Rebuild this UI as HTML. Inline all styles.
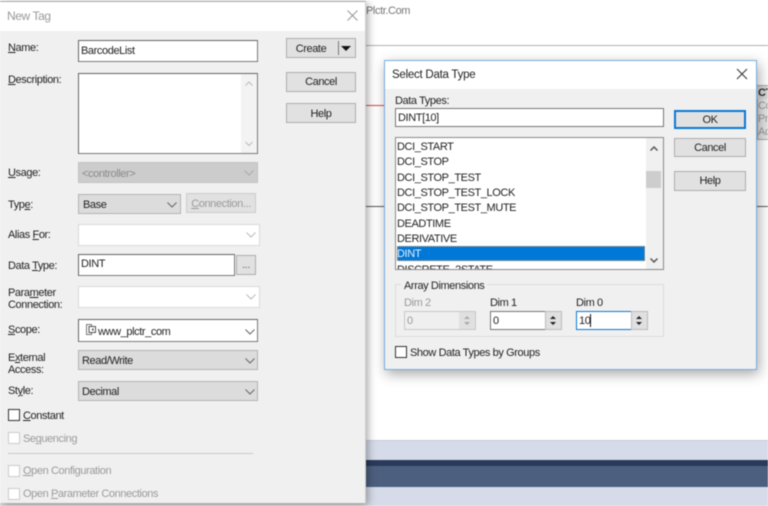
<!DOCTYPE html>
<html><head><meta charset="utf-8">
<style>
html,body{margin:0;padding:0;width:768px;height:506px;overflow:hidden;background:#fff}
body{position:relative;font-family:"Liberation Sans",sans-serif;font-size:11px;letter-spacing:-.4px;color:#222}
#w{position:absolute;left:0;top:0;width:768px;height:506px;overflow:hidden;filter:blur(.45px)}
.a{position:absolute;box-sizing:border-box}
.t{position:absolute;white-space:nowrap;line-height:13px;transform:translateY(1px)}
.g{color:#9a9a9a}
.in{position:absolute;box-sizing:border-box;background:#fff;border:1px solid #7a7a7a;border-top-color:#666;border-left-color:#666;padding-left:2px}
.dis{position:absolute;box-sizing:border-box;background:#fff;border:1px solid #d9d9d9}
.sel{position:absolute;box-sizing:border-box;background:#dcdcdc;border:1px solid #b4b4b4}
.btn{position:absolute;box-sizing:border-box;background:#e1e1e1;border:1px solid #adadad;text-align:center;color:#222}
.cb{position:absolute;box-sizing:border-box;width:12px;height:12px;background:#fff;border:1px solid #333}
.cbd{border-color:#ccc}
.li{position:absolute;left:397px;width:248px;height:15px;line-height:18px;color:#222;font-size:11px;white-space:nowrap}
u{text-decoration-thickness:1px;text-underline-offset:1px}
svg{position:absolute;overflow:visible}
.ar{fill:none;stroke:#666;stroke-width:1}
.arg{fill:none;stroke:#bbb;stroke-width:1}
</style></head><body><div id="w">
<!-- background -->
<div class="a" style="left:366px;top:45px;width:402px;height:1px;background:#b0b0b0"></div>
<div class="a" style="left:366px;top:105px;width:20px;height:1px;background:#d44"></div>
<div class="a" style="left:366px;top:206px;width:402px;height:1px;background:#555"></div>
<div class="t" style="left:366px;top:4px;color:#777;font-size:11px">Plctr.Com</div>
<div class="a" style="left:757px;top:85px;width:11px;height:55px;background:#e4e4e4;border-top:1px solid #aaa;border-bottom:1px solid #aaa;border-left:1px solid #aaa"></div>
<div class="a" style="left:757px;top:86px;width:11px;height:13px;background:#d8d8d8"></div>
<div class="t" style="left:758px;top:86px;font-weight:bold;color:#333">CT</div>
<div class="t g" style="left:758px;top:99px">Co</div>
<div class="t g" style="left:758px;top:112px">Pre</div>
<div class="t g" style="left:758px;top:125px">Ac</div>
<div class="a" style="left:366px;top:440px;width:402px;height:66px;background:#d5dbe8;border-top:1px solid #c4cad8"></div>
<div class="a" style="left:366px;top:460px;width:402px;height:6px;background:#2a3a5a"></div>
<div class="a" style="left:366px;top:466px;width:402px;height:21px;background:#4d5f7f"></div>
<div class="a" style="left:0;top:500px;width:366px;height:6px;background:#ddd"></div>

<!-- New Tag dialog -->
<div class="a" style="left:0;top:1px;width:366px;height:502px;background:#f0f0f0;border-top:1px solid #a8a8a8;border-right:1px solid #cfcfcf;box-shadow:2px 2px 8px rgba(0,0,0,.35)"></div>
<div class="a" style="left:0;top:2px;width:365px;height:29px;background:#fff"></div>
<div class="t" style="left:7px;top:9px;color:#999;font-size:12px">New Tag</div>
<svg style="left:347px;top:10px" width="11" height="11"><path d="M.5.500l10 10M10.500.500l-10 10" stroke="#999" fill="none"/></svg>

<div class="t" style="left:8px;top:41px"><u>N</u>ame:</div>
<div class="in" style="left:78px;top:40px;width:180px;height:22px;line-height:21px">BarcodeList</div>
<div class="t" style="left:8px;top:73px"><u>D</u>escription:</div>
<div class="in" style="left:78px;top:73px;width:180px;height:81px"></div>
<div class="a" style="left:241px;top:74px;width:16px;height:79px;background:#f3f3f3"></div>
<svg style="left:245px;top:81px" width="8" height="6"><path d="M.5 4.500l3.500-3.500 3.500 3.500" class="arg"/></svg>
<svg style="left:245px;top:141px" width="8" height="6"><path d="M.5 1l3.500 3.500L7.500 1" class="arg"/></svg>

<div class="t" style="left:8px;top:166px"><u>U</u>sage:</div>
<div class="a" style="left:78px;top:162px;width:180px;height:21px;background:#cccccc;border:1px solid #c4c4c4"></div>
<div class="t" style="left:82px;top:167px;color:#8a8a8a">&lt;controller&gt;</div>
<svg style="left:244px;top:170px" width="10" height="6"><path d="M.5.500l4.500 4.500 4.500-4.500" fill="none" stroke="#aaa"/></svg>

<div class="t" style="left:8px;top:198px">Typ<u>e</u>:</div>
<div class="sel" style="left:78px;top:194px;width:103px;height:20px"></div>
<div class="t" style="left:83px;top:198px">Base</div>
<svg style="left:167px;top:202px" width="10" height="6"><path d="M.5.500l4.500 4.500 4.500-4.500" class="ar"/></svg>
<div class="btn" style="left:186px;top:193px;width:70px;height:20px;line-height:20px;color:#9a9a9a;border-color:#ccc"><u>C</u>onnection...</div>

<div class="t" style="left:8px;top:228px">Alias <u>F</u>or:</div>
<div class="dis" style="left:78px;top:224px;width:182px;height:22px"></div>
<svg style="left:246px;top:232px" width="10" height="6"><path d="M.5.500l4.500 4.500 4.500-4.500" class="arg"/></svg>

<div class="t" style="left:8px;top:259px">Data <u>T</u>ype:</div>
<div class="in" style="left:78px;top:254px;width:157px;height:22px;padding-top:3px;line-height:13px">DINT</div>
<div class="btn" style="left:236px;top:255px;width:20px;height:20px;line-height:19px;color:#666">...</div>

<div class="t" style="left:8px;top:286px;line-height:12px">Para<u>m</u>eter<br>Connection:</div>
<div class="dis" style="left:78px;top:286px;width:182px;height:22px"></div>
<svg style="left:246px;top:294px" width="10" height="6"><path d="M.5.500l4.500 4.500 4.500-4.500" class="arg"/></svg>

<div class="t" style="left:8px;top:323px"><u>S</u>cope:</div>
<div class="in" style="left:78px;top:319px;width:180px;height:23px"></div>
<svg style="left:86px;top:324px" width="10" height="11"><path d="M.5.500h5v10h-5z" fill="#fff" stroke="#777"/><path d="M3 2.500h6.500v6H3z" fill="#fff" stroke="#555"/><path d="M7.500 4l-2 1.500 2 1.500z" fill="#444"/></svg>
<div class="t" style="left:98px;top:325px">www_plctr_com</div>
<svg style="left:245px;top:329px" width="10" height="6"><path d="M.5.500l4.500 4.500 4.500-4.500" class="ar"/></svg>

<div class="t" style="left:8px;top:351px;line-height:12px">E<u>x</u>ternal<br>Access:</div>
<div class="sel" style="left:78px;top:350px;width:180px;height:20px"></div>
<div class="t" style="left:82px;top:354px">Read/Write</div>
<svg style="left:245px;top:358px" width="10" height="6"><path d="M.5.500l4.500 4.500 4.500-4.500" class="ar"/></svg>

<div class="t" style="left:8px;top:384px">St<u>y</u>le:</div>
<div class="sel" style="left:78px;top:381px;width:180px;height:20px"></div>
<div class="t" style="left:82px;top:385px">Decimal</div>
<svg style="left:245px;top:389px" width="10" height="6"><path d="M.5.500l4.500 4.500 4.500-4.500" class="ar"/></svg>

<div class="cb" style="left:8px;top:409px"></div>
<div class="t" style="left:23px;top:409px"><u>C</u>onstant</div>
<div class="cb cbd" style="left:8px;top:432px"></div>
<div class="t g" style="left:23px;top:432px">Se<u>q</u>uencing</div>
<div class="a" style="left:8px;top:453px;width:245px;height:1px;background:#c8c8c8"></div>
<div class="cb cbd" style="left:8px;top:465px"></div>
<div class="t g" style="left:23px;top:464px"><u>O</u>pen Configuration</div>
<div class="cb cbd" style="left:8px;top:488px"></div>
<div class="t g" style="left:23px;top:487px">Open <u>P</u>arameter Connections</div>

<div class="btn" style="left:286px;top:38px;width:70px;height:20px;line-height:20px;padding-right:20px">Create</div>
<div class="a" style="left:338px;top:41px;width:1px;height:14px;background:#777"></div>
<svg style="left:341px;top:46px" width="10" height="5"><path d="M0 0h10L5 5z" fill="#111"/></svg>
<div class="btn" style="left:286px;top:72px;width:70px;height:20px;line-height:19px">Cancel</div>
<div class="btn" style="left:286px;top:103px;width:70px;height:20px;line-height:20px">Help</div>

<!-- Select Data Type dialog -->
<div class="a" style="left:384px;top:60px;width:373px;height:310px;background:#f0f0f0;border:1px solid #76aee0;box-shadow:2px 4px 12px rgba(0,0,0,.35)"></div>
<div class="a" style="left:385px;top:61px;width:371px;height:28px;background:#fff"></div>
<div class="t" style="left:392px;top:68px;font-size:11.500px;letter-spacing:-.25px">Select Data Type</div>
<svg style="left:737px;top:69px" width="10" height="10"><path d="M0 0l10 10M10 0L0 10" stroke="#333" fill="none"/></svg>

<div class="t" style="left:395px;top:94px">Data Types:</div>
<div class="in" style="left:395px;top:108px;width:269px;height:19px;line-height:18px;border-color:#777">DINT[10]</div>
<div class="btn" style="left:674px;top:110px;width:72px;height:19px;line-height:16px;border:2px solid #0a78d6">OK</div>
<div class="btn" style="left:674px;top:138px;width:72px;height:19px;line-height:18px">Cancel</div>
<div class="btn" style="left:674px;top:171px;width:72px;height:20px;line-height:19px">Help</div>

<div class="a" style="left:395px;top:137px;width:269px;height:133px;background:#fff;border:1px solid #8a8a8a;overflow:hidden"></div>
<div class="a" style="left:646px;top:138px;width:17px;height:131px;background:#f0f0f0"></div>
<div class="a" style="left:646px;top:171px;width:15px;height:17px;background:#cdcdcd"></div>
<svg style="left:650px;top:146px" width="8" height="5"><path d="M.5 4.500L4 1l3.500 3.500" fill="none" stroke="#555" stroke-width="1.500"/></svg>
<svg style="left:650px;top:258px" width="8" height="5"><path d="M.5.500L4 4l3.500-3.500" fill="none" stroke="#555" stroke-width="1.500"/></svg>
<div class="li" style="top:138px">DCI_START</div>
<div class="li" style="top:153px">DCI_STOP</div>
<div class="li" style="top:169px">DCI_STOP_TEST</div>
<div class="li" style="top:184px">DCI_STOP_TEST_LOCK</div>
<div class="li" style="top:199px">DCI_STOP_TEST_MUTE</div>
<div class="li" style="top:215px">DEADTIME</div>
<div class="li" style="top:230px">DERIVATIVE</div>
<div class="li" style="top:246px;background:#0078d7;color:#e8f0f8;outline:1px dotted #b89878;outline-offset:-1px;line-height:16px">DINT</div>
<div class="a" style="left:397px;top:261px;width:248px;height:8px;overflow:hidden"><div class="li" style="left:0;top:0">DISCRETE_2STATE</div></div>

<div class="a" style="left:395px;top:284px;width:269px;height:53px;border:1px solid #dcdcdc"></div>
<div class="t" style="left:401px;top:279px;background:#f0f0f0;padding:0 3px">Array Dimensions</div>
<div class="t g" style="left:404px;top:296px">Dim 2</div>
<div class="t" style="left:490px;top:296px">Dim 1</div>
<div class="t" style="left:576px;top:296px">Dim 0</div>

<div class="a" style="left:404px;top:311px;width:72px;height:19px;background:#efefef;border:1px solid #c8c8c8"></div>
<div class="t g" style="left:407px;top:314px">0</div>
<div class="a" style="left:459px;top:312px;width:16px;height:17px;background:#e0e0e0"></div>
<svg style="left:463px;top:315px" width="8" height="11"><path d="M1 4l3-3 3 3zM1 7l3 3 3-3z" fill="#aaa"/></svg>

<div class="a" style="left:490px;top:311px;width:72px;height:19px;background:#fff;border:1px solid #777"></div>
<div class="t" style="left:493px;top:314px">0</div>
<div class="a" style="left:545px;top:311px;width:17px;height:19px;background:#e0e0e0;border:1px solid #bbb"></div>
<svg style="left:549px;top:315px" width="8" height="11"><path d="M1 4l3-3 3 3zM1 7l3 3 3-3z" fill="#222"/></svg>

<div class="a" style="left:576px;top:311px;width:72px;height:19px;background:#fff;border:1px solid #0a78d6"></div>
<div class="t" style="left:579px;top:314px">10</div>
<div class="a" style="left:590px;top:314px;width:1px;height:13px;background:#111"></div>
<div class="a" style="left:631px;top:311px;width:17px;height:19px;background:#e0e0e0;border:1px solid #bbb"></div>
<svg style="left:635px;top:315px" width="8" height="11"><path d="M1 4l3-3 3 3zM1 7l3 3 3-3z" fill="#222"/></svg>

<div class="cb" style="left:395px;top:346px"></div>
<div class="t" style="left:410px;top:346px">Show Data Types by Groups</div>
</div></body></html>
